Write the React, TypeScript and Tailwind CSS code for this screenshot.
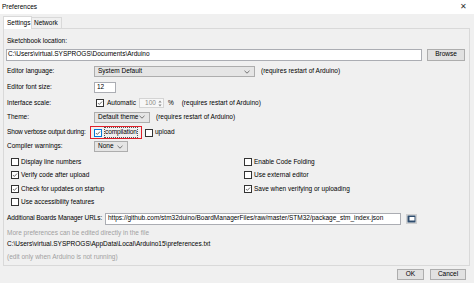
import React from 'react';

function Check({ checked = false, blue = false }: { checked?: boolean; blue?: boolean }) {
  return (
    <span
      className={
        blue
          ? 'flex h-[8px] w-[8px] shrink-0 items-center justify-center border border-[#0078d7] bg-white'
          : 'flex h-[8px] w-[8px] shrink-0 items-center justify-center border border-[#333333] bg-white'
      }
    >
      {checked && (
        <svg width="8" height="8" viewBox="0 0 8 8">
          <path d="M1.3 4.1 L3.1 5.9 L6.7 2.1" fill="none" stroke={blue ? '#1a1a1a' : '#222'} strokeWidth="0.9" />
        </svg>
      )}
    </span>
  );
}

function Chevron() {
  return (
    <svg width="6" height="4" viewBox="0 0 6 4" className="shrink-0">
      <path d="M0.5 0.8 L3 3.2 L5.5 0.8" fill="none" stroke="#555" strokeWidth="0.8" />
    </svg>
  );
}

function Select({ value, width }: { value: string; width: string }) {
  return (
    <div className={`flex h-[11px] shrink-0 items-center justify-between border border-[#adadad] bg-[#e5e5e5] pl-[3px] pr-[4px] ${width}`}>
      <span>{value}</span>
      <Chevron />
    </div>
  );
}

const left = [
  { label: 'Display line numbers', checked: false },
  { label: 'Verify code after upload', checked: true },
  { label: 'Check for updates on startup', checked: true },
  { label: 'Use accessibility features', checked: false },
];

const right = [
  { label: 'Enable Code Folding', checked: false },
  { label: 'Use external editor', checked: false },
  { label: 'Save when verifying or uploading', checked: true },
];

export default function App() {
  return (
    <div
      className="flex h-[283px] w-[474px] flex-col overflow-hidden whitespace-nowrap bg-[#f0f0f0] text-[6.5px] leading-none text-black"
      style={{ fontFamily: '"Liberation Sans", Arial, sans-serif' }}
    >
      {/* title bar */}
      <div className="flex h-[14px] items-center justify-between bg-white pl-[2px] pr-[7px]">
        <span>Preferences</span>
        <span className="text-[8px] text-[#333]">✕</span>
      </div>

      {/* tabs */}
      <div className="relative z-10 flex h-[14px] items-end pl-[3px]">
        <div className="mb-[-1px] flex h-[13px] w-[29px] items-center border border-b-0 border-[#d9d9d9] bg-white pl-[3px]">
          Settings
        </div>
        <div className="flex h-[11px] w-[30px] items-center border border-l-0 border-b-0 border-[#d9d9d9] bg-[#f0f0f0] pl-[2px]">
          Network
        </div>
      </div>

      {/* panel */}
      <div className="ml-[3px] flex h-[238px] w-[467px] flex-col border border-[#d9d9d9] bg-[#f0f0f0] pl-[2px]">
        <div className="mt-[8px] flex h-[9px] items-center pl-[1px]">Sketchbook location:</div>
        <div className="mt-[2px] flex h-[13px] items-center gap-[5px]">
          <div className="flex h-[12px] w-[416px] items-center border border-[#abadb3] bg-white pl-[1px]">
            C:\Users\virtual.SYSPROGS\Documents\Arduino
          </div>
          <div className="flex h-[12px] w-[38px] items-center justify-center border border-[#adadad] bg-[#e1e1e1]">
            Browse
          </div>
        </div>

        <div className="mt-[4px] flex h-[13px] items-center">
          <span className="w-[88px] shrink-0 pl-[1px]">Editor language:</span>
          <Select value="System Default" width="w-[161px]" />
          <span className="ml-[6px]">(requires restart of Arduino)</span>
        </div>

        <div className="mt-[3px] flex h-[12px] items-center">
          <span className="w-[88px] shrink-0 pl-[1px]">Editor font size:</span>
          <div className="flex h-[11px] w-[22px] items-center border border-[#abadb3] bg-white pl-[2px]">12</div>
        </div>

        <div className="mt-[4px] flex h-[12px] items-center">
          <span className="w-[88px] shrink-0 pl-[1px]">Interface scale:</span>
          <span className="ml-[2px]">
            <Check checked />
          </span>
          <span className="ml-[3px]">Automatic</span>
          <div className="ml-[3px] flex h-[10px] w-[25px] items-center justify-end border border-[#d4d4d4] bg-[#f7f7f7] pr-[1px] text-[#8a8a8a]">
            <span className="mr-[2px]">100</span>
            <svg width="4" height="7" viewBox="0 0 4 7">
              <path d="M2 0.6 L3.6 2.6 L0.4 2.6 Z" fill="#8a8a8a" />
              <path d="M2 6.4 L3.6 4.4 L0.4 4.4 Z" fill="#8a8a8a" />
            </svg>
          </div>
          <span className="ml-[4px]">%</span>
          <span className="ml-[8px]">(requires restart of Arduino)</span>
        </div>

        <div className="mt-[2px] flex h-[12px] items-center">
          <span className="w-[88px] shrink-0 pl-[1px]">Theme:</span>
          <Select value="Default theme" width="w-[56px]" />
          <span className="ml-[6px]">(requires restart of Arduino)</span>
        </div>

        <div className="mt-[3px] flex h-[13px] items-center">
          <span className="w-[84px] shrink-0 pl-[1px] tracking-[-0.15px]">Show verbose output during:</span>
          <div className="flex h-[13px] w-[52px] shrink-0 items-center border border-[#e0202a] pl-[3px]">
            <Check checked blue />
            <span className="ml-[2px] border border-dotted border-[#555] py-[1px] tracking-[-0.1px]">compilation</span>
          </div>
          <span className="ml-[3px]">
            <Check />
          </span>
          <span className="ml-[2px]">upload</span>
        </div>

        <div className="mt-[2px] flex h-[11px] items-center">
          <span className="w-[88px] shrink-0 pl-[1px]">Compiler warnings:</span>
          <Select value="None" width="w-[34px]" />
        </div>

        <div className="mt-[3px] grid grid-cols-[233px_1fr] pl-[5px]">
          <div className="flex flex-col">
            {left.map((item) => (
              <div key={item.label} className="flex h-[13.5px] items-center gap-[2px]">
                <Check checked={item.checked} />
                <span>{item.label}</span>
              </div>
            ))}
          </div>
          <div className="flex flex-col">
            {right.map((item) => (
              <div key={item.label} className="flex h-[13.5px] items-center gap-[2px]">
                <Check checked={item.checked} />
                <span>{item.label}</span>
              </div>
            ))}
          </div>
        </div>

        <div className="mt-[3px] flex h-[13px] items-center">
          <span className="w-[99px] shrink-0 pl-[1px] tracking-[-0.1px]">Additional Boards Manager URLs:</span>
          <div className="flex h-[12px] w-[296px] shrink-0 items-center overflow-hidden border border-[#abadb3] bg-white pl-[2px]">
            https://github.com/stm32duino/BoardManagerFiles/raw/master/STM32/package_stm_index.json
          </div>
          <div className="ml-[5px] flex h-[10px] w-[11px] items-center justify-center border border-[#cfcfcf] bg-[#e6e6e6]">
            <svg width="9" height="8" viewBox="0 0 9 8">
              <rect x="0.5" y="0.5" width="8" height="7" fill="#2f4d6e" />
              <rect x="2.5" y="2" width="5" height="3.5" fill="#ffffff" />
            </svg>
          </div>
        </div>

        <div className="mt-[3px] flex h-[10px] items-center pl-[1px] text-[#a0a0a0]">
          More preferences can be edited directly in the file
        </div>
        <div className="mt-[1.5px] flex h-[10px] items-center pl-[1px]">
          C:\Users\virtual.SYSPROGS\AppData\Local\Arduino15\preferences.txt
        </div>
        <div className="mt-[2.5px] flex h-[10px] items-center pl-[1px] text-[#a0a0a0]">
          (edit only when Arduino is not running)
        </div>
      </div>

      {/* footer */}
      <div className="mt-[3px] flex justify-end gap-[6px] pr-[8px]">
        <div className="flex h-[11px] w-[27px] items-center justify-center border border-[#adadad] bg-[#e1e1e1]">OK</div>
        <div className="flex h-[11px] w-[36px] items-center justify-center border border-[#adadad] bg-[#e1e1e1]">
          Cancel
        </div>
      </div>
    </div>
  );
}
